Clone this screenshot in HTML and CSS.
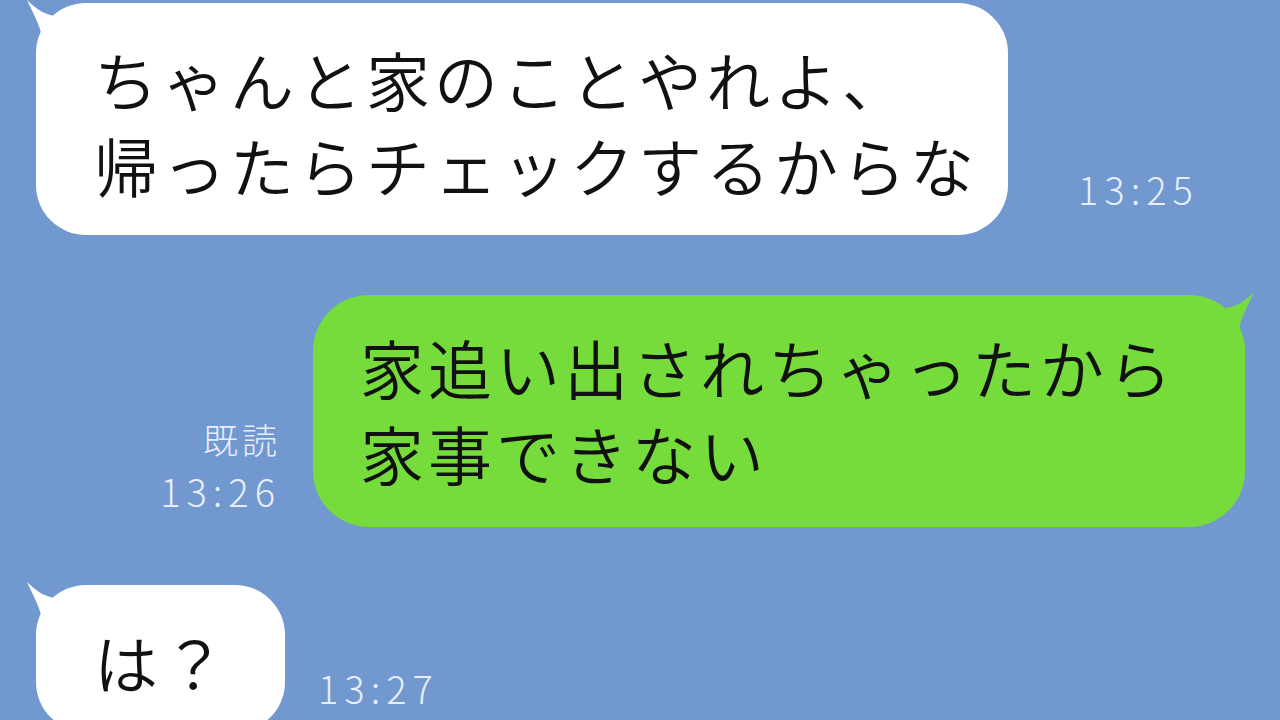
FILE: index.html
```html
<!DOCTYPE html>
<html lang="ja">
<head>
    <meta charset="UTF-8">
    <meta name="viewport" content="width=device-width, initial-scale=1.0">
    <title>トーク</title>
    <link rel="stylesheet" href="styles.css">
</head>
<body>
    <div class="chat">
        <!-- 相手のメッセージ -->
        <div class="row row-in first">
            <div class="bubble bubble-white">
                <svg class="tail" viewBox="0 0 72 66"><path d="M72,4 C60,6 46,17 32,17 C20,17 10,10 1,1 C6,12 14,26 16,38 C16,44 11,49 10,56 L10,66 L72,66 Z"/></svg>
                <p class="text">ちゃんと家のことやれよ、<br>帰ったらチェックするからな</p>
            </div>
            <div class="meta">
                <span class="time">13:25</span>
            </div>
        </div>

        <!-- 自分のメッセージ -->
        <div class="row row-out">
            <div class="meta">
                <span class="read">既読</span>
                <span class="time">13:26</span>
            </div>
            <div class="bubble bubble-green">
                <svg class="tail" viewBox="0 0 72 66"><path d="M72,4 C60,6 46,17 32,17 C20,17 10,10 1,1 C6,12 14,26 16,38 C16,44 11,49 10,56 L10,66 L72,66 Z"/></svg>
                <p class="text">家追い出されちゃったから<br>家事できない</p>
            </div>
        </div>

        <div class="row row-in last">
            <div class="bubble bubble-white">
                <svg class="tail" viewBox="0 0 72 66"><path d="M72,4 C60,6 46,17 32,17 C20,17 10,10 1,1 C6,12 14,26 16,38 C16,44 11,49 10,56 L10,66 L72,66 Z"/></svg>
                <p class="text">は？</p>
            </div>
            <div class="meta">
                <span class="time">13:27</span>
            </div>
        </div>
    </div>
</body>
</html>
```

FILE: styles.css
```css
body {
    margin: 0;
    padding: 0;
    height: 720px;
    overflow: hidden;
    background-color: #7298d0;
    font-family: "Noto Sans CJK JP", "Noto Sans", sans-serif;
}
.chat {
    display: flex;
    flex-direction: column;
    padding-top: 3px;
}
.row {
    display: flex;
    align-items: flex-end;
}
.row-in {
    padding-left: 36px;
}
.row-out {
    justify-content: flex-end;
    padding-right: 35px;
    margin-top: 60px;
}
.row-in.last {
    margin-top: 58px;
}
.bubble {
    position: relative;
    border-radius: 50px;
}
.bubble-white {
    background-color: #fff;
}
.bubble-green {
    background-color: #75dc3b;
    border-radius: 56px;
}
.tail {
    position: absolute;
    top: -4px;
    left: -10px;
    width: 72px;
    height: 66px;
}
.bubble-white .tail path {
    fill: #fff;
}
.bubble-green .tail path {
    fill: #75dc3b;
}
.row-out .tail {
    left: auto;
    right: -10px;
    transform: scaleX(-1);
}
.text {
    position: relative;
    margin: 0;
    font-size: 64px;
    font-weight: 350;
    line-height: 86px;
    letter-spacing: 4px;
    color: #111;
    white-space: nowrap;
}
.first .text {
    padding: 32px 30px 28px 58px;
}
.bubble-green .text {
    padding: 28px 69px 32px 47px;
}
.last .text {
    padding: 33px 55px 28px 58px;
}
.meta {
    display: flex;
    flex-direction: column;
    align-items: flex-end;
    color: #e6eefb;
    font-weight: 300;
}
.time, .read {
    font-size: 38px;
    line-height: 52px;
    letter-spacing: 6px;
}
.read {
    font-size: 35px;
    letter-spacing: 4px;
}
.first .meta {
    margin-left: 70px;
    margin-bottom: 20px;
}
.row-out .meta {
    margin-right: 32px;
    margin-bottom: 10px;
}
.last .meta {
    margin-left: 33px;
    margin-bottom: 18px;
}
```
